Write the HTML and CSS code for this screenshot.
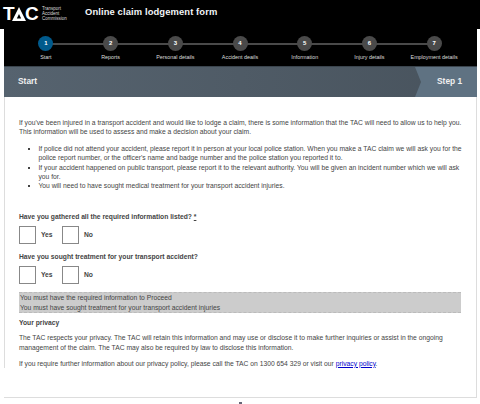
FILE: index.html
```html
<!DOCTYPE html>
<html lang="en">
<head>
  <meta charset="UTF-8">
  <title>Online claim lodgement form - TAC</title>
  <link rel="stylesheet" href="styles.css">
</head>
<body>

  <!-- Header -->
  <div class="header">
    <div class="logo">
      <span class="logo-mark">T<svg class="logo-a" viewBox="0 0 14 14"><path d="M7 0 L14 14 L0 14 Z M7 7 L4.8 11.5 L9.2 11.5 Z" fill="#fff" fill-rule="evenodd"/></svg>C</span>
      <span class="logo-text">Transport<br>Accident<br>Commission</span>
    </div>
    <div class="page-title">Online claim lodgement form</div>
  </div>

  <div class="card">
    <!-- Steps -->
    <div class="stepper">
      <div class="step active"><span class="dot">1</span><span class="step-name">Start</span></div>
      <div class="step"><span class="dot">2</span><span class="step-name">Reports</span></div>
      <div class="step"><span class="dot">3</span><span class="step-name">Personal details</span></div>
      <div class="step"><span class="dot">4</span><span class="step-name">Accident deails</span></div>
      <div class="step"><span class="dot">5</span><span class="step-name">Information</span></div>
      <div class="step"><span class="dot">6</span><span class="step-name">Injury details</span></div>
      <div class="step"><span class="dot">7</span><span class="step-name">Employment details</span></div>
    </div>

    <div class="step-bar">
      <div class="step-title">Start</div>
      <div class="step-count">Step 1</div>
    </div>

    <div class="content">
      <p class="intro">If you've been injured in a transport accident and would like to lodge a claim, there is some information that the TAC will need to allow us to help you. This information will be used to assess and make a decision about your claim.</p>

      <ul class="notes">
        <li>If police did not attend your accident, please report it in person at your local police station. When you make a TAC claim we will ask you for the police report number, or the officer's name and badge number and the police station you reported it to.</li>
        <li>If your accident happened on public transport, please report it to the relevant authority. You will be given an incident number which we will ask you for.</li>
        <li>You will need to have sought medical treatment for your transport accident injuries.</li>
      </ul>

      <div class="question first">Have you gathered all the required information listed? <u>*</u></div>
      <div class="choices">
        <span class="box"></span><span class="choice">Yes</span>
        <span class="box"></span><span class="choice">No</span>
      </div>

      <div class="question">Have you sought treatment for your transport accident?</div>
      <div class="choices">
        <span class="box"></span><span class="choice">Yes</span>
        <span class="box"></span><span class="choice">No</span>
      </div>

      <div class="errors">
        You must have the required information to Proceed<br>
        You must have sought treatment for your transport accident injuries
      </div>

      <div class="privacy-title">Your privacy</div>
      <p class="privacy">The TAC respects your privacy. The TAC will retain this information and may use or disclose it to make further inquiries or assist in the ongoing management of the claim. The TAC may also be required by law to disclose this information.</p>
      <p class="privacy">If you require further information about our privacy policy, please call the TAC on 1300 654 329 or visit our <a href="#">privacy policy</a>.</p>
    </div>
  </div>

  <div class="page-end"></div>

</body>
</html>
```

FILE: styles.css
```css
* {
  margin: 0;
  padding: 0;
  box-sizing: border-box;
}

body {
  font-family: 'Liberation Sans', Arial, sans-serif;
  font-size: 6.74px;
  line-height: 9.4px;
  color: #444;
  background-color: #fff;
  height: 404px;
  overflow: hidden;
}

.header {
  background-color: #000;
  height: 29px;
  display: flex;
  align-items: flex-start;
  color: #fff;
}

.logo {
  display: flex;
  align-items: center;
  width: 85px;
  padding: 5px 0 0 3px;
}

.logo-mark {
  display: flex;
  align-items: center;
  font-size: 19px;
  line-height: 17px;
  font-weight: bold;
  width: 38px;
  letter-spacing: -0.5px;
}

.logo-a {
  width: 14px;
  height: 14px;
  margin: 0 -1px 0 -2px;
}

.logo-text {
  font-size: 4.5px;
  line-height: 5px;
  margin-left: 1px;
  color: #ddd;
}

.page-title {
  font-size: 9.4px;
  line-height: 12px;
  font-weight: bold;
  padding-top: 6px;
  letter-spacing: 0.12px;
  color: #f2f5f7;
}

.card {
  margin: 0 3px 0 4px;
  height: 369px;
  border: 1px solid #ddd;
  border-top: 0;
  border-left-width: 0;
}

.stepper {
  background-color: #000;
  display: grid;
  grid-template-columns: repeat(7, 64.7px);
  padding: 7px 0 0 9.6px;
  height: 37px;
  margin-right: -1px;
}

.step {
  position: relative;
  display: flex;
  flex-direction: column;
  align-items: center;
}

/* line joining a dot to the next one */
.step::after {
  content: "";
  position: absolute;
  top: 6.5px;
  left: 50%;
  width: 64.7px;
  height: 2px;
  background-color: #4a4a4a;
}

.step:last-child::after {
  display: none;
}

.dot {
  position: relative;
  z-index: 1;
  width: 15px;
  height: 15px;
  line-height: 15px;
  border-radius: 50%;
  background-color: #4a4a4a;
  color: #fff;
  font-weight: bold;
  font-size: 6px;
  text-align: center;
}

.step.active .dot {
  background-color: #005a8c;
}

.step-name {
  margin-top: 2px;
  font-size: 5.4px;
  line-height: 8px;
  color: #ddd;
  white-space: nowrap;
}

.step-bar {
  display: flex;
  justify-content: space-between;
  height: 31px;
  margin-right: -1px;
  border-top: 1px solid #3a444d;
  background: linear-gradient(to right, #56636f, #48535d);
  color: #f0f0f0;
  font-size: 8.4px;
  font-weight: bold;
  line-height: 29px;
}

.step-title {
  padding-left: 14px;
}

.step-count {
  width: 62px;
  padding-left: 22px;
  background-color: #5f7282;
  clip-path: polygon(0 0, 100% 0, 100% 100%, 0 100%, 6px 50%);
}

.content {
  padding: 21px 10px 0 14px;
  border-left: 1px solid #ddd;
}

.intro {
  margin-bottom: 7px;
}

.notes {
  margin-left: 19.5px;
  list-style: square;
}

.question {
  font-weight: bold;
  margin-top: 8px;
}

.question.first {
  margin-top: 21px;
}

.choices {
  display: flex;
  align-items: center;
  margin-top: 4.5px;
}

.box {
  width: 17px;
  height: 18px;
  border: 1px solid #888;
  background-color: #fff;
}

.choice {
  font-weight: bold;
  margin-left: 5px;
  width: 21px;
}

.errors {
  margin-top: 8.5px;
  margin-right: 5px;
  height: 20.5px;
  padding-left: 1px;
  background-color: #ccc;
  border-top: 1px dashed #bbb;
  border-bottom: 1px dashed #bbb;
}

.privacy-title {
  font-weight: bold;
  margin-top: 5px;
  margin-bottom: 6px;
}

.privacy {
  margin-bottom: 6.6px;
  line-height: 9.6px;
}

a {
  color: #00c;
}

/* top of whatever follows the card, cut off by the window */
.page-end {
  width: 3px;
  height: 2px;
  margin: 4px auto 0;
  background-color: #667;
}
```
